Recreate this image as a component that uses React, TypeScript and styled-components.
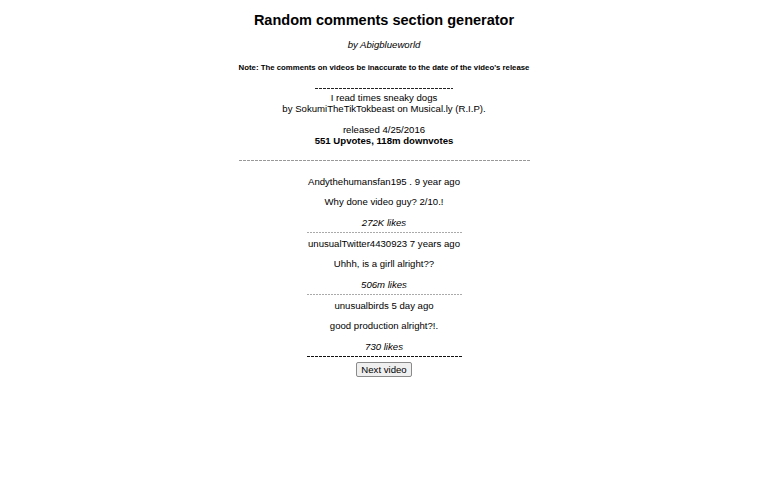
import React from "react";
import styled, { createGlobalStyle } from "styled-components";

const Global = createGlobalStyle`
  html, body { margin: 0; padding: 0; background: #fff; }
  body { font-family: "Liberation Sans", Arial, sans-serif; color: #000; }
`;

const Page = styled.main`
  display: flex;
  flex-direction: column;
  align-items: center;
  text-align: center;
  padding-top: 11px;
`;

const Title = styled.h1`
  margin: 0;
  font-size: 14.5px;
  line-height: 18px;
  font-weight: bold;
`;

const Byline = styled.p`
  margin: 10px 0 0;
  font-size: 9.6px;
  line-height: 12px;
  font-style: italic;
`;

const Note = styled.p`
  margin: 12px 0 0;
  font-size: 7.8px;
  line-height: 10px;
  font-weight: bold;
`;

/* a thin dashed divider drawn as a repeating gradient */
const Rule = styled.div<{ $width: number; $tone: string; $gap: number; $dash: number }>`
  margin-top: ${(p) => p.$gap}px;
  width: ${(p) => p.$width}px;
  height: 1px;
  background: repeating-linear-gradient(
    to right,
    ${(p) => p.$tone} 0 ${(p) => p.$dash}px,
    transparent ${(p) => p.$dash}px ${(p) => p.$dash + 1}px
  );
`;

const Line = styled.p<{ $gap?: number; $bold?: boolean; $italic?: boolean }>`
  margin: ${(p) => p.$gap ?? 0}px 0 0;
  font-size: 9.6px;
  line-height: 11px;
  font-weight: ${(p) => (p.$bold ? "bold" : "normal")};
  font-style: ${(p) => (p.$italic ? "italic" : "normal")};
`;

const NextButton = styled.button`
  margin-top: 5px;
  font-family: "Liberation Sans", Arial, sans-serif;
  font-size: 9.6px;
  line-height: 11px;
  padding: 1px 4px;
  background: #efefef;
  border: 1px solid #8a8a8a;
  border-radius: 2px;
  color: #000;
`;

const comments = [
  { who: "Andythehumansfan195 . 9 year ago", text: "Why done video guy? 2/10.!", likes: "272K likes" },
  { who: "unusualTwitter4430923 7 years ago", text: "Uhhh, is a girll alright??", likes: "506m likes" },
  { who: "unusualbirds 5 day ago", text: "good production alright?!.", likes: "730 likes" },
];

const Comment: React.FC<{ who: string; text: string; likes: string; first: boolean; last: boolean }> = ({
  who,
  text,
  likes,
  first,
  last,
}) => (
  <>
    <Line $gap={first ? 15 : 5}>{who}</Line>
    <Line $gap={9}>{text}</Line>
    <Line $gap={10} $italic>{likes}</Line>
    {last ? (
      <Rule $width={155} $tone="#111" $dash={3} $gap={4} />
    ) : (
      <Rule $width={155} $tone="#aaa" $dash={2} $gap={4} />
    )}
  </>
);

export default function App() {
  return (
    <>
      <Global />
      <Page>
        <Title>Random comments section generator</Title>
        <Byline>by Abigblueworld</Byline>
        <Note>Note: The comments on videos be inaccurate to the date of the video's release</Note>
        <Rule $width={138} $tone="#222" $dash={3} $gap={15} />
        <Line $gap={3}>I read times sneaky dogs</Line>
        <Line>by SokumiTheTikTokbeast on Musical.ly (R.I.P).</Line>
        <Line $gap={10}>released 4/25/2016</Line>
        <Line $bold>551 Upvotes, 118m downvotes</Line>
        <Rule $width={291} $tone="#999" $dash={3} $gap={14} />
        {comments.map((c, i) => (
          <Comment key={i} {...c} first={i === 0} last={i === comments.length - 1} />
        ))}
        <NextButton type="button">Next video</NextButton>
      </Page>
    </>
  );
}
